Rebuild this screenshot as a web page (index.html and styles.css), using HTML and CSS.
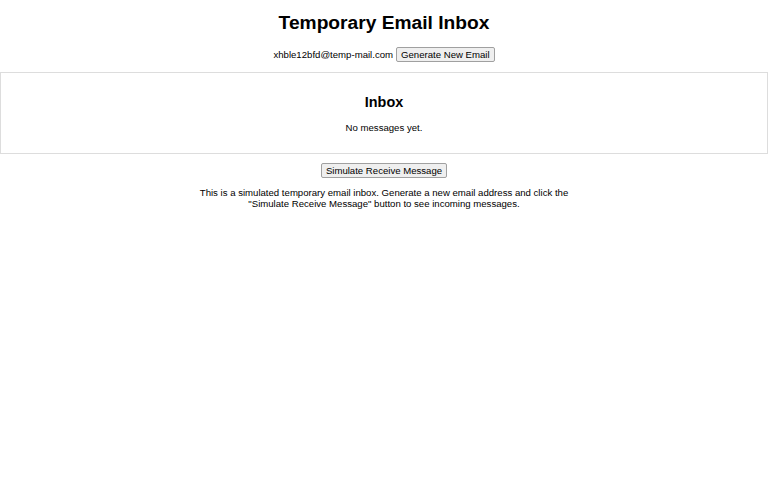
FILE: index.html
```html
<!DOCTYPE html>
<html lang="en">
<head>
  <meta charset="UTF-8" />
  <meta name="viewport" content="width=device-width, initial-scale=1.0"/>
  <title>Temporary Email Inbox</title>
  <link rel="stylesheet" href="styles.css">
</head>
<body>

  <h1>Temporary Email Inbox</h1>

  <div class="address-row">
    <span id="email-address">xhble12bfd@temp-mail.com</span>
    <button class="btn" id="generate-btn">Generate New Email</button>
  </div>

  <div class="inbox">
    <h2>Inbox</h2>
    <div id="message-list">
      <p class="empty">No messages yet.</p>
    </div>
  </div>

  <div class="actions">
    <button class="btn" id="simulate-btn">Simulate Receive Message</button>
  </div>

  <p class="note">
    This is a simulated temporary email inbox. Generate a new email address and click the
    "Simulate Receive Message" button to see incoming messages.
  </p>

</body>
</html>
```

FILE: styles.css
```css
* { box-sizing: border-box; margin: 0; padding: 0; }

body {
  font-family: 'Liberation Sans', Arial, sans-serif;
  font-size: 9.6px;
  color: #000;
  background-color: #fff;
  text-align: center;
}

h1 {
  font-size: 19.2px;
  font-weight: bold;
  margin-top: 12px;
  line-height: 22px;
}

.address-row {
  margin-top: 13px;
  display: flex;
  justify-content: center;
  align-items: center;
  gap: 3px;
}

.btn {
  font-family: 'Liberation Sans', Arial, sans-serif;
  font-size: 9.6px;
  color: #000;
  background-color: #efefef;
  border: 1px solid #a0a0a0;
  border-radius: 2px;
  padding: 1px 4px;
  height: 15px;
  line-height: 11px;
}

.inbox {
  margin-top: 10px;
  border: 1px solid #ddd;
  padding: 21px 10px 19px;
}

.inbox h2 {
  font-size: 14.4px;
  font-weight: bold;
  line-height: 17px;
}

.inbox .empty {
  margin-top: 11px;
  line-height: 12px;
}

.actions {
  margin-top: 9px;
  line-height: 0;
}

.note {
  max-width: 372px;
  margin: 9px auto 0;
  line-height: 11px;
}
```
